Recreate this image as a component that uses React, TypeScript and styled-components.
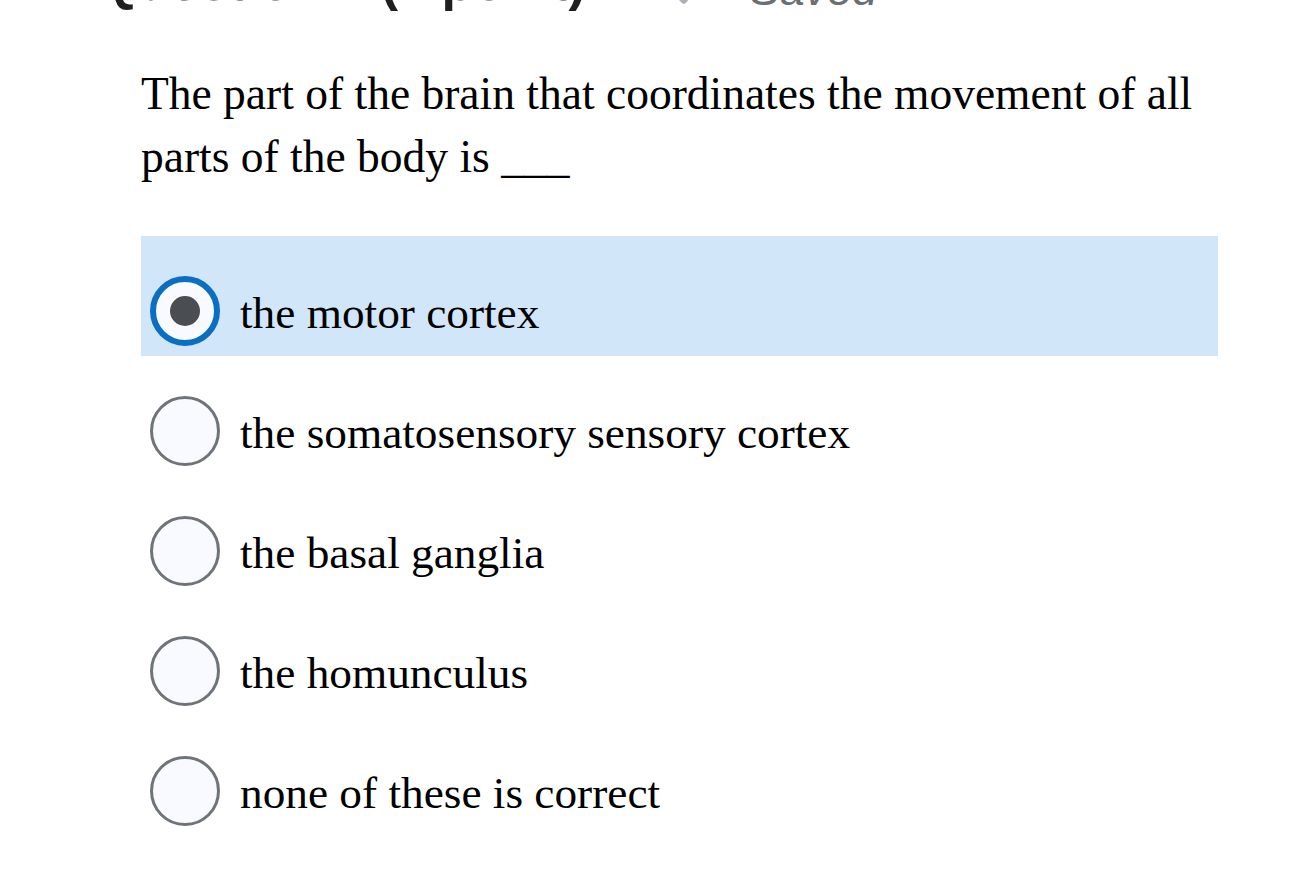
import React, { useState } from "react";
import styled, { createGlobalStyle } from "styled-components";

const GlobalStyle = createGlobalStyle`
  html, body {
    margin: 0;
    padding: 0;
    background: #ffffff;
    overflow: hidden;
  }
`;

const Page = styled.div`
  width: 1290px;
  height: 888px;
  overflow: hidden;
  background: #ffffff;
`;

// header row, scrolled mostly out of view
const Header = styled.div`
  margin-top: -48px;
  padding-left: 98px;
  height: 60px;
  white-space: nowrap;
  font-family: "Liberation Sans", Arial, sans-serif;
  font-size: 52px;
  line-height: 60px;
`;

const Title = styled.span`
  font-weight: 700;
  color: #1f1f1f;
`;

const Points = styled.span`
  font-weight: 700;
  color: #1f1f1f;
  margin-left: 14px;
`;

const SavedStatus = styled.span`
  display: inline-block;
  vertical-align: -5px;
  margin-left: 82px;
  color: #6b6f74;
  font-style: italic;
  font-weight: 400;
  font-size: 45px;
`;

const CheckIcon = styled.svg`
  display: inline-block;
  width: 40px;
  height: 40px;
  vertical-align: -6px;
  margin-right: 42px;
`;

const Body = styled.div`
  padding: 50px 0 0 141px;
  width: 1077px;
`;

const Question = styled.p`
  margin: 0;
  font-family: "Liberation Serif", "Times New Roman", serif;
  font-size: 45.5px;
  line-height: 63px;
  color: #000000;
`;

const Options = styled.div`
  display: flex;
  flex-direction: column;
  margin-top: 48px;
`;

const Option = styled.label<{ $selected: boolean }>`
  display: flex;
  align-items: center;
  gap: 20px;
  height: 120px;
  box-sizing: border-box;
  padding: 40px 0 10px 9px;
  background: ${(p) => (p.$selected ? "#d2e6fa" : "transparent")};
  cursor: pointer;
`;

const Radio = styled.span<{ $selected: boolean }>`
  flex: none;
  width: 70px;
  height: 70px;
  box-sizing: border-box;
  border-radius: 50%;
  background: #f8faff;
  border: ${(p) => (p.$selected ? "6px solid #0a6fc2" : "3px solid #6f7479")};
  display: flex;
  align-items: center;
  justify-content: center;
`;

const Dot = styled.span`
  width: 30px;
  height: 30px;
  border-radius: 50%;
  background: #4a4d52;
`;

const OptionText = styled.span`
  font-family: "Liberation Serif", "Times New Roman", serif;
  font-size: 45.3px;
  line-height: 63px;
  color: #000000;
  transform: translateY(2px);
`;

const answers = [
  "the motor cortex",
  "the somatosensory sensory cortex",
  "the basal ganglia",
  "the homunculus",
  "none of these is correct",
];

export default function App() {
  const [selected, setSelected] = useState(0);

  return (
    <Page>
      <GlobalStyle />
      <Header>
        <Title>Question 1</Title>
        <Points>(1 point)</Points>
        <SavedStatus>
          <CheckIcon viewBox="0 0 24 24">
            <path
              d="M4 12.5 L9.5 18 L20.5 6"
              fill="none"
              stroke="#aab0b6"
              strokeWidth="3.2"
              strokeLinecap="round"
              strokeLinejoin="round"
            />
          </CheckIcon>
          Saved
        </SavedStatus>
      </Header>

      <Body>
        <Question>
          The part of the brain that coordinates the movement of all parts of
          the body is ___
        </Question>

        <Options>
          {answers.map((a, i) => (
            <Option key={a} $selected={selected === i} onClick={() => setSelected(i)}>
              <Radio $selected={selected === i}>{selected === i ? <Dot /> : null}</Radio>
              <OptionText>{a}</OptionText>
            </Option>
          ))}
        </Options>
      </Body>
    </Page>
  );
}
